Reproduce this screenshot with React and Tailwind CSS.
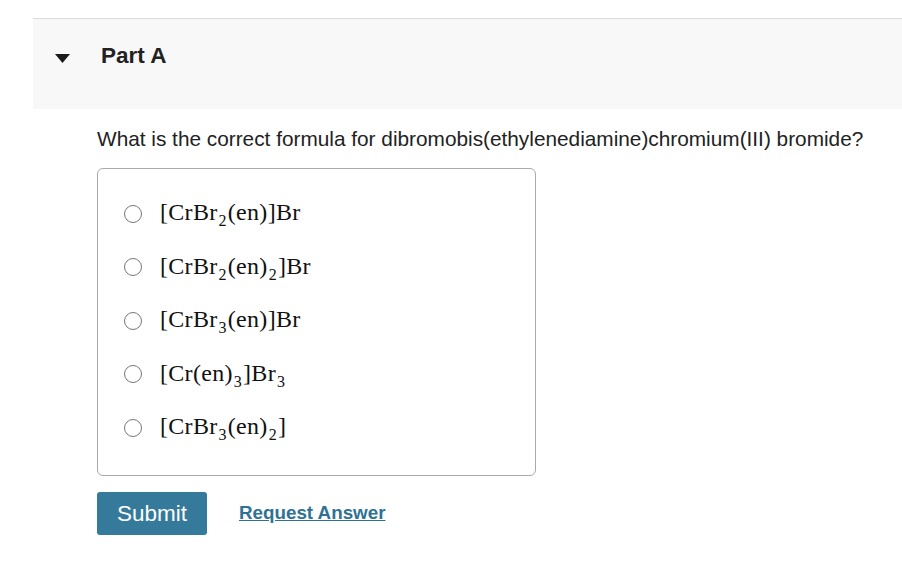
const OPTIONS = [
  { id: 'a', parts: ['[CrBr', '2', '(en)]Br'] },
  { id: 'b', parts: ['[CrBr', '2', '(en)', '2', ']Br'] },
  { id: 'c', parts: ['[CrBr', '3', '(en)]Br'] },
  { id: 'd', parts: ['[Cr(en)', '3', ']Br', '3'] },
  { id: 'e', parts: ['[CrBr', '3', '(en)', '2', ']'] },
]

function Formula({ parts }) {
  return (
    <span className="font-['Liberation_Serif',serif] text-[24px] tracking-[0.3px] text-[#111] leading-none">
      {parts.map((p, i) =>
        i % 2 === 1
          ? <sub key={i} className="text-[16px] align-[-2px] mx-[1px]">{p}</sub>
          : <span key={i}>{p}</span>
      )}
    </span>
  )
}

export default function App() {
  return (
    <div className="w-[902px] h-[568px] bg-white font-['Liberation_Sans',Arial,sans-serif] pt-[18px]">
      <div className="ml-[33px] border-t border-[#dcdcdc] bg-[#f8f8f8] h-[91px] flex items-center pb-[16px]">
        <svg className="ml-[22px] mt-[4px]" width="15" height="9" viewBox="0 0 15 9">
          <polygon points="0,0 15,0 7.5,9" fill="#1a1a1a" />
        </svg>
        <span className="ml-[31px] text-[22.5px] font-bold text-[#222]">Part A</span>
      </div>

      <div className="ml-[97px]">
        <p className="mt-[17px] text-[20.8px] text-[#222] leading-[26px]">
          What is the correct formula for dibromobis(ethylenediamine)chromium(III) bromide?
        </p>

        <div className="mt-[16px] w-[439px] h-[308px] border border-[#aaa] rounded-[6px] pt-[18px] pl-[26px] flex flex-col">
          {OPTIONS.map(o => (
            <label key={o.id} className="flex items-center h-[53.5px]">
              <span className="w-[18px] h-[18px] rounded-full border border-[#777] bg-white shrink-0" />
              <span className="ml-[18px]"><Formula parts={o.parts} /></span>
            </label>
          ))}
        </div>

        <div className="mt-[16px] flex items-center">
          <button className="w-[110px] h-[43px] bg-[#357a9b] text-white text-[22.5px] rounded-[3px]">Submit</button>
          <a className="ml-[32px] text-[18.8px] font-bold text-[#2f7293] underline">Request Answer</a>
        </div>
      </div>
    </div>
  )
}
